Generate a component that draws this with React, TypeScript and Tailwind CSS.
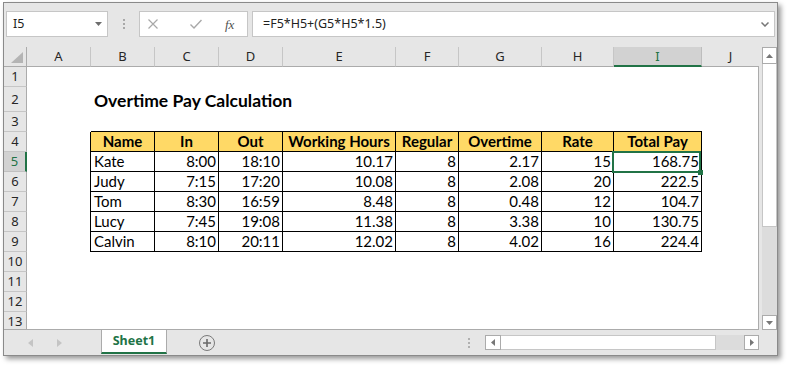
import React from 'react';

const COLS = ['A', 'B', 'C', 'D', 'E', 'F', 'G', 'H', 'I', 'J'];
const W = ['w-[64px]', 'w-[64px]', 'w-[64px]', 'w-[64px]', 'w-[113px]', 'w-[63px]', 'w-[83px]', 'w-[72px]', 'w-[88px]', 'w-[57px]'];

const HEAD = ['Name', 'In', 'Out', 'Working Hours', 'Regular', 'Overtime', 'Rate', 'Total Pay'];
const DATA = [
  ['Kate', '8:00', '18:10', '10.17', '8', '2.17', '15', '168.75'],
  ['Judy', '7:15', '17:20', '10.08', '8', '2.08', '20', '222.5'],
  ['Tom', '8:30', '16:59', '8.48', '8', '0.48', '12', '104.7'],
  ['Lucy', '7:45', '19:08', '11.38', '8', '3.38', '10', '130.75'],
  ['Calvin', '8:10', '20:11', '12.02', '8', '4.02', '16', '224.4'],
];

const UI = { fontFamily: '"Noto Sans", "Open Sans", sans-serif' };
const CAL = { fontFamily: 'Lato, "Noto Sans", sans-serif' };

function RowHead({ n, sel }: { n: number; sel?: boolean }) {
  return (
    <div
      className={
        sel
          ? 'w-[23px] h-full shrink-0 flex items-center justify-center bg-[#d2d2d2] border-b border-b-[#c0c0c0] border-r-2 border-r-[#217346] text-[13px] leading-none text-[#217346]'
          : 'w-[23px] h-full shrink-0 flex items-center justify-center bg-[#e6e6e6] border-b border-b-[#c6c6c6] border-r border-r-[#ababab] text-[13px] leading-none text-[#262626]'
      }
      style={UI}
    >
      {n}
    </div>
  );
}

function Cell({ i, cls, children }: { i: number; cls?: string; children?: React.ReactNode }) {
  return <div className={`${W[i]} h-full shrink-0 flex items-center ${i === 9 ? 'border-r border-r-[#ababab]' : ''} ${cls || ''}`}>{children}</div>;
}

function Row({ n, tall, children }: { n: number; tall?: boolean; children?: React.ReactNode }) {
  return (
    <div className={tall ? 'flex h-[25px] shrink-0' : 'flex h-[20px] shrink-0'}>
      <RowHead n={n} sel={n === 5} />
      {children}
    </div>
  );
}

function EmptyCells({ from = 0 }: { from?: number }) {
  return (
    <>
      {COLS.slice(from).map((_, k) => (
        <Cell key={k + from} i={k + from} />
      ))}
    </>
  );
}

export default function App() {
  return (
    <div className="w-[787px] h-[367px] bg-white overflow-hidden">
      <div className="relative ml-[3px] mt-[2px] w-[775px] h-[354px] border border-[#8a8a8a] bg-[#e6e6e6] shadow-[3px_3px_5px_rgba(0,0,0,0.4)] flex flex-col">
        {/* formula bar */}
        <div className="flex h-[26px] mt-[8px] pl-[2px] pr-[2px] shrink-0">
          <div className="w-[102px] h-full bg-white border border-[#c6c6c6] flex items-center justify-between pl-[6px] pr-[5px]">
            <span className="text-[12.5px] text-[#222]" style={UI}>I5</span>
            <svg width="7" height="4" viewBox="0 0 7 4"><path d="M0 0H7L3.5 4Z" fill="#6d6d6d" /></svg>
          </div>
          <div className="w-[31px] h-full flex flex-col items-center justify-center gap-[2px]">
            <div className="w-[2px] h-[2px] bg-[#a8a8a8]" />
            <div className="w-[2px] h-[2px] bg-[#a8a8a8]" />
            <div className="w-[2px] h-[2px] bg-[#a8a8a8]" />
          </div>
          <div className="w-[109px] h-full bg-white border border-[#c6c6c6] flex items-center">
            <svg className="ml-[8px]" width="10" height="10" viewBox="0 0 10 10"><path d="M0.5 0.5L9.5 9.5M9.5 0.5L0.5 9.5" stroke="#a8a8a8" strokeWidth="1.2" /></svg>
            <svg className="ml-[32px]" width="12" height="10" viewBox="0 0 12 10"><path d="M0.5 5.5L4 9L11.5 1" stroke="#a8a8a8" strokeWidth="1.4" fill="none" /></svg>
            <span className="ml-[23px] text-[13px] italic text-[#505050] leading-none" style={{ fontFamily: '"Liberation Serif", serif' }}>fx</span>
          </div>
          <div className="ml-[4px] flex-1 h-full bg-white border border-[#c6c6c6] flex items-center justify-between pl-[10px] pr-[5px]">
            <span className="text-[12.5px] text-[#222]" style={UI}>=F5*H5+(G5*H5*1.5)</span>
            <svg width="8" height="5" viewBox="0 0 8 5"><path d="M0.5 0.5L4 4L7.5 0.5" stroke="#777" strokeWidth="1.5" fill="none" /></svg>
          </div>
        </div>

        {/* sheet + vertical scroll */}
        <div className="flex mt-[10px] h-[283px] shrink-0">
          <div className="w-[755px] flex flex-col">
            {/* column headers */}
            <div className="flex h-[20px] shrink-0">
              <div className="w-[23px] h-full border-r border-b border-[#ababab] bg-[#e6e6e6] flex items-end justify-end pr-[3px] pb-[3px]">
                <svg width="12" height="11" viewBox="0 0 12 11"><path d="M12 0V11H0Z" fill="#b4b4b4" /></svg>
              </div>
              {COLS.map((c, i) => (
                <div
                  key={c}
                  className={
                    i === 8
                      ? `${W[i]} h-full shrink-0 flex items-center justify-center bg-[#d2d2d2] border-b-2 border-b-[#217346] border-r border-r-[#bdbdbd] text-[13px] leading-none text-[#217346]`
                      : `${W[i]} h-full shrink-0 flex items-center justify-center bg-[#e6e6e6] border-b border-b-[#ababab] ${i === 9 ? '' : 'border-r border-r-[#c6c6c6]'} text-[13px] leading-none text-[#262626]`
                  }
                  style={UI}
                >
                  {c}
                </div>
              ))}
            </div>
            {/* body */}
            <div className="h-[263px] flex flex-col overflow-hidden border-b border-[#ababab] bg-white text-[15px] text-black" style={CAL}>
              <Row n={1}><EmptyCells /></Row>
              <Row n={2} tall>
                <Cell i={0} />
                <Cell i={1} cls="items-end pb-[3px] pl-[3px] overflow-visible">
                  <span className="whitespace-nowrap text-[17.5px] font-bold leading-none relative">Overtime Pay Calculation</span>
                </Cell>
                <EmptyCells from={2} />
              </Row>
              <Row n={3}>
                <Cell i={0} />
                {HEAD.map((_, k) => (
                  <Cell key={k} i={k + 1} cls="border-b border-b-black" />
                ))}
                <Cell i={9} />
              </Row>
              <Row n={4}>
                <Cell i={0} cls="border-r border-r-black" />
                {HEAD.map((h, k) => (
                  <Cell key={k} i={k + 1} cls="border-r border-b border-black bg-[#ffd966] justify-center font-bold">
                    {h}
                  </Cell>
                ))}
                <Cell i={9} />
              </Row>
              {DATA.map((r, ri) => (
                <Row key={ri} n={5 + ri}>
                  <Cell i={0} cls="border-r border-r-black" />
                  {r.map((v, k) => (
                    <Cell key={k} i={k + 1} cls={k === 0 ? 'border-r border-b border-black pl-[3px]' : 'border-r border-b border-black justify-end pr-[2px]'}>
                      {v}
                    </Cell>
                  ))}
                  <Cell i={9} />
                </Row>
              ))}
              <Row n={10}><EmptyCells /></Row>
              <Row n={11}><EmptyCells /></Row>
              <Row n={12}><EmptyCells /></Row>
              <Row n={13}><EmptyCells /></Row>
            </div>
          </div>
          {/* vertical scrollbar */}
          <div className="ml-[3px] w-[15px] flex flex-col">
            <div className="h-[17px] bg-white border border-[#ababab] flex items-center justify-center">
              <svg width="7" height="4" viewBox="0 0 7 4"><path d="M0 4H7L3.5 0Z" fill="#777" /></svg>
            </div>
            <div className="h-[163px] bg-white border-x border-b border-[#c6c6c6]" />
            <div className="flex-1 bg-[#dcdcdc]" />
            <div className="h-[15px] bg-white border border-[#ababab] flex items-center justify-center">
              <svg width="7" height="4" viewBox="0 0 7 4"><path d="M0 0H7L3.5 4Z" fill="#777" /></svg>
            </div>
          </div>
        </div>

        {/* bottom bar */}
        <div className="flex h-[25px] shrink-0 items-center">
          <div className="w-[97px] h-full flex items-center">
            <svg className="ml-[24px]" width="5" height="8" viewBox="0 0 5 8"><path d="M5 0V8L0 4Z" fill="#c4c4c4" /></svg>
            <svg className="ml-[24px]" width="5" height="8" viewBox="0 0 5 8"><path d="M0 0V8L5 4Z" fill="#c4c4c4" /></svg>
          </div>
          <div className="w-[66px] h-[24px] self-start bg-white border-x border-[#ababab] border-b-2 border-b-[#217346] flex items-center justify-center">
            <span className="text-[12.5px] font-bold text-[#217346]" style={UI}>Sheet1</span>
          </div>
          <svg className="ml-[31px]" width="18" height="18" viewBox="0 0 18 18">
            <circle cx="9" cy="9" r="7.5" fill="none" stroke="#7a7a7a" strokeWidth="1" />
            <path d="M9 5V13M5 9H13" stroke="#6a6a6a" strokeWidth="1.6" />
          </svg>
          <div className="ml-[249px] w-[8px] flex flex-col items-center gap-[2px]">
            <div className="w-[2px] h-[2px] bg-[#b0b0b0]" />
            <div className="w-[2px] h-[2px] bg-[#b0b0b0]" />
            <div className="w-[2px] h-[2px] bg-[#b0b0b0]" />
          </div>
          <div className="ml-[12px] w-[274px] h-[15px] flex">
            <div className="w-[16px] h-full bg-white border border-[#ababab] flex items-center justify-center">
              <svg width="4" height="7" viewBox="0 0 4 7"><path d="M4 0V7L0 3.5Z" fill="#777" /></svg>
            </div>
            <div className="w-[215px] h-full bg-white border-y border-r border-[#c6c6c6]" />
            <div className="flex-1 h-full bg-[#dcdcdc]" />
            <div className="w-[15px] h-full bg-white border border-[#ababab] flex items-center justify-center">
              <svg width="4" height="7" viewBox="0 0 4 7"><path d="M0 0V7L4 3.5Z" fill="#777" /></svg>
            </div>
          </div>
        </div>

        {/* selection */}
        <div className="absolute left-[608px] top-[148px] w-[89px] h-[22px] border-2 border-[#217346] pointer-events-none" />
        <div className="absolute left-[694px] top-[167px] w-[5px] h-[5px] bg-[#217346] pointer-events-none" />
      </div>
    </div>
  );
}
